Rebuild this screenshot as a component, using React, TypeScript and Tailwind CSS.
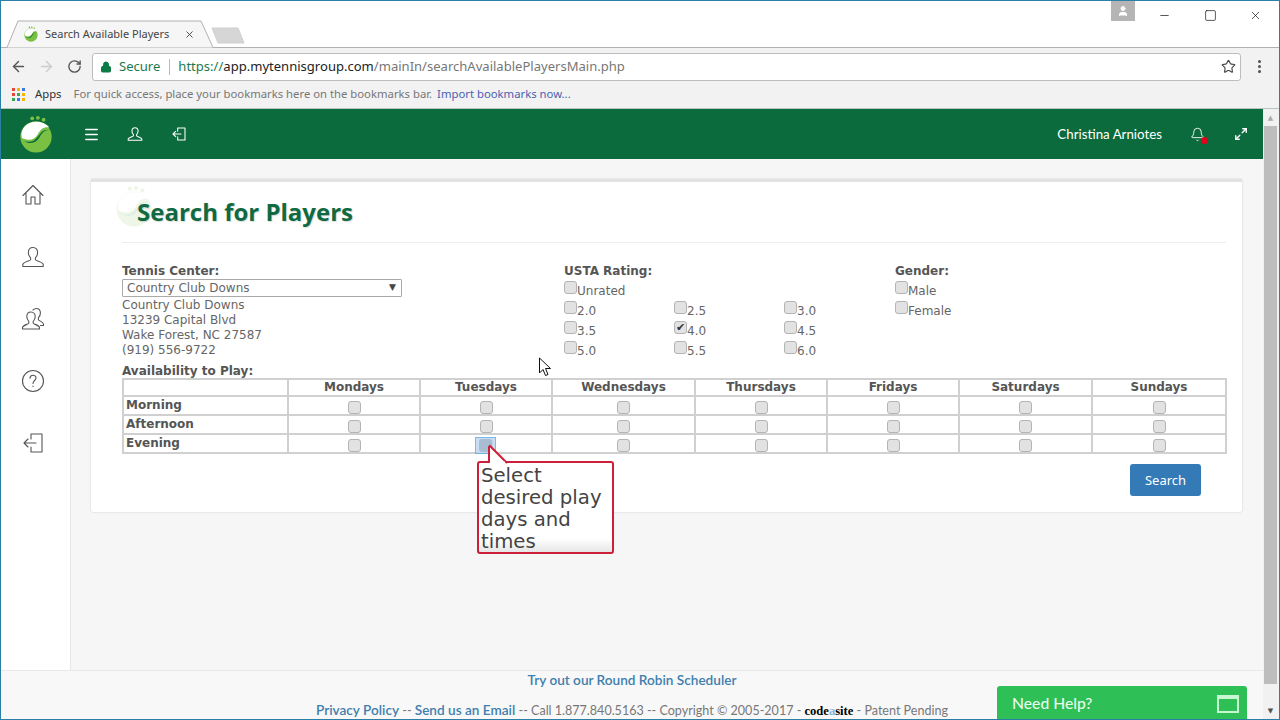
import { Bell, Maximize2, Menu, MoreVertical, RotateCw, Star, ArrowLeft, ArrowRight, Lock, X, Minus, Square, User } from 'lucide-react';

const days = ['Mondays', 'Tuesdays', 'Wednesdays', 'Thursdays', 'Fridays', 'Saturdays', 'Sundays'];
const times = ['Morning', 'Afternoon', 'Evening'];
const ratings = ['2.0', '2.5', '3.0', '3.5', '4.0', '4.5', '5.0', '5.5', '6.0'];
const appsColors = ['bg-[#e8453c]', 'bg-[#f4b400]', 'bg-[#3b78e7]', 'bg-[#e8453c]', 'bg-[#34a853]', 'bg-[#f4b400]', 'bg-[#34a853]', 'bg-[#3b78e7]', 'bg-[#f4b400]'];

const Logo = ({ size, className }: { size: number; className?: string }) => (
  <svg width={size} height={size} viewBox="0 0 36 40" className={className}>
    <circle cx="18" cy="23" r="16.5" fill="#7ac143" />
    <path d="M3 24C1 14 9 7 18 7c6 0 11 2 14 6-6-1-9 2-12 7-3 6-10 8-17 4z" fill="#fff" />
    <path d="M5 27c7 5 14 2 17-4 3-5 6-8 12-7-3-1-7-1-10 2-4 4-6 9-11 10-3 .5-6 0-8-1z" fill="#0b6b3d" />
    <circle cx="14" cy="3.500" r="2" fill="#7ac143" />
    <circle cx="20" cy="3" r="2" fill="#7ac143" />
    <circle cx="26" cy="5" r="2" fill="#7ac143" />
  </svg>
);

const LineIcon = ({ d, size = 24, weight = 1.1, className }: { d: string; size?: number; weight?: number; className?: string }) => (
  <svg width={size} height={size} viewBox="0 0 24 24" fill="none" stroke="currentColor" strokeWidth={weight} strokeLinejoin="round" strokeLinecap="round" className={className}>
    <path d={d} />
  </svg>
);

const userPath = 'M12 2.500c-3 0-4.600 2.200-4.600 5 0 2.400 1 4.200 2.200 5.300v2c0 1-7 2-7.800 4.700v2h20.400v-2c-.8-2.700-7.800-3.700-7.800-4.700v-2c1.200-1.100 2.200-2.900 2.200-5.300 0-2.800-1.600-5-4.600-5z';
const homePath = 'M2 12.500 12 2.500l10 10M5 10v11h5v-7h4v7h5V10';
const usersPath = 'M10 5c-2.700 0-4.200 2-4.200 4.600 0 2.200.9 3.800 2 4.800v1.800c0 1-5.800 1.700-6.300 4.300v1.500h17v-1.500c-.5-2.600-6.300-3.300-6.300-4.300v-1.800c1.100-1 2-2.600 2-4.800C14.200 7 12.700 5 10 5zM12 3c1-1 2-1.500 3.200-1.500 2.700 0 4.200 2 4.200 4.600 0 2.200-.9 3.800-2 4.800v1.800c0 1 4.600 1.700 5.100 4.300v1.500h-3';
const exitPath = 'M10 8V3h11v18H10v-5M15 12H3M3 12l4-4M3 12l4 4';
const helpPath = 'M12 1.500a10.500 10.500 0 1 0 0 21 10.500 10.500 0 0 0 0-21zM9 9.300c0-4 6-4 6-.3 0 2.500-3 2.500-3 5.500M12 17v.6';

const Box = ({ checked }: { checked?: boolean }) => (
  <span className="inline-flex h-[13px] w-[13px] shrink-0 items-center justify-center rounded-[3px] border border-[#b4b4b4] bg-[#e2e2e2] text-[11px] leading-none text-[#333]">
    {checked ? '✔' : ''}
  </span>
);

const Rating = ({ label, checked }: { label: string; checked?: boolean }) => (
  <div className="flex h-5 items-start">
    <span className="mt-[2px] flex"><Box checked={checked} /></span>
    <span className="mt-[5px] leading-[15px]">{label}</span>
  </div>
);

const App = () => {
  return (
    <div className="relative flex h-[720px] w-[1280px] flex-col overflow-hidden border border-[#2b7fa6] bg-white font-['DejaVu_Sans',sans-serif] text-[12px] text-[#666]">
      {/* browser tabs */}
      <div className="relative h-[46px] shrink-0 bg-white font-['Noto_Sans',sans-serif]">
        <svg width="250" height="47" className="absolute left-0 top-0">
          <path d="M0 46.500h6L17 20h183l12 26.500" fill="#f6f6f6" stroke="#b0b0b0" />
          <path d="M211 27h26l6 15h-26z" fill="#d6d6d6" stroke="#cfcfcf" />
        </svg>
        <div className="absolute left-[22px] top-[25px] flex items-center">
          <Logo size={16} />
          <span className="ml-[6px] text-[11px] leading-[16px] text-[#444]">Search Available Players</span>
          <X size={11} strokeWidth={2} className="ml-[15px] text-[#444]" />
        </div>
        <div className="absolute left-[1110px] top-0 flex h-5 w-6 items-center justify-center bg-[#b5b5b5]">
          <User size={12} fill="#fff" stroke="#fff" />
        </div>
        <div className="absolute left-[1157px] top-[8px] flex items-center gap-[33px] text-black">
          <Minus size={13} strokeWidth={1.2} />
          <Square size={13} strokeWidth={1.2} />
          <X size={13} strokeWidth={1.2} className="-ml-[1px]" />
        </div>
      </div>

      {/* toolbar */}
      <div className="flex h-[37px] shrink-0 items-center border-t border-[#b0b0b0] bg-[#f2f2f2] pl-[9px] pt-[1px] font-['Noto_Sans',sans-serif]">
        <ArrowLeft size={17} className="text-[#555]" />
        <ArrowRight size={17} className="ml-[11px] text-[#ccc]" />
        <RotateCw size={15} strokeWidth={2.2} className="ml-[12px] text-[#555]" />
        <div className="ml-[10px] flex h-[28px] w-[1149px] items-center rounded-[3px] border border-[#bdbdbd] bg-white pl-[7px] pr-[4px] text-[13.05px]">
          <Lock size={12} fill="#0b7a45" stroke="#0b7a45" />
          <span className="ml-[7px] text-[#1c7a50]">Secure</span>
          <span className="ml-[9px] h-[16px] w-px bg-[#bbb]" />
          <span className="ml-[8px] text-[#1c7a50]">https://</span>
          <span className="text-[#222]">app.mytennisgroup.com</span>
          <span className="text-[#777]">/mainIn/searchAvailablePlayersMain.php</span>
          <Star size={15} strokeWidth={1.8} className="ml-auto text-[#444]" />
        </div>
        <MoreVertical size={17} strokeWidth={2.4} className="ml-[10px] text-[#555]" />
      </div>

      {/* bookmarks */}
      <div className="flex h-[24px] shrink-0 items-center bg-[#f2f2f2] pb-[3px] pl-[11px] font-['Noto_Sans',sans-serif] text-[11.3px]">
        <div className="grid grid-cols-3 gap-[2px]">
          {appsColors.map((c, i) => (
            <span key={i} className={`h-[3px] w-[3px] ${c}`} />
          ))}
        </div>
        <span className="ml-[10px] text-[#333]">Apps</span>
        <span className="ml-[12px] text-[#777]">For quick access, place your bookmarks here on the bookmarks bar.</span>
        <span className="ml-[5px] text-[#4a5fb0]">Import bookmarks now...</span>
      </div>

      <div className="flex min-h-0 flex-1 border-t border-[#b8c4bc]">
        <div className="flex min-w-0 flex-1 flex-col">
          {/* app header */}
          <div className="flex h-[50px] shrink-0 items-center bg-[#0b6b3d] pl-[16px] pr-[15px] font-['Noto_Sans',sans-serif] text-white">
            <Logo size={38} />
            <Menu size={17} strokeWidth={2.2} className="ml-[28px]" />
            <LineIcon d={userPath} size={16} weight={1.6} className="ml-[27px]" />
            <LineIcon d={exitPath} size={16} weight={1.6} className="ml-[28px]" />
            <span className="ml-auto mt-[1px] font-['Lato',sans-serif] text-[13.3px]">Christina Arniotes</span>
            <div className="relative ml-[28px]">
              <Bell size={15} strokeWidth={1.4} />
              <span className="absolute left-[11px] top-[10px] h-[7px] w-[7px] rounded-full bg-[#e2001a]" />
            </div>
            <Maximize2 size={14} strokeWidth={2.4} className="ml-[29px]" />
          </div>

          <div className="flex min-h-0 flex-1">
            {/* sidebar */}
            <div className="flex w-[70px] shrink-0 flex-col items-center gap-[38px] border-r border-[#e6e6e6] bg-white pr-[6px] pt-[24px] text-[#555]">
              <LineIcon d={homePath} />
              <LineIcon d={userPath} />
              <LineIcon d={usersPath} />
              <LineIcon d={helpPath} />
              <LineIcon d={exitPath} />
            </div>

            {/* main */}
            <div className="min-w-0 flex-1 bg-[#f6f6f6] pl-[20px] pr-[21px] pt-[20px]">
              <div className="h-[333px] rounded-[2px] border-t-[3px] border-[#e2e2e2] bg-white pl-[31px] pr-[16px] shadow-[0_0_2px_rgba(0,0,0,0.2)]">
                <div className="relative h-[61px] border-b border-[#eeeeee]">
                  <Logo size={42} className="absolute -left-[9px] top-[3px] opacity-[0.12]" />
                  <h1 className="relative pl-[15px] pt-[14px] font-['Open_Sans',sans-serif] text-[24px] font-bold leading-[32px] text-[#0f6a42] [text-shadow:1px_1px_1px_rgba(0,0,0,0.15)]">
                    Search for Players
                  </h1>
                </div>

                <div className="mt-[21px] flex h-[100px]">
                  <div className="w-[442px]">
                    <div className="font-bold leading-[15px] text-[#555]">Tennis Center:</div>
                    <div className="flex h-[18px] w-[280px] items-center justify-between rounded-[1px] border border-[#aaa] pl-[4px] pr-[5px]">
                      <span>Country Club Downs</span>
                      <span className="text-[9px] text-[#444]">▼</span>
                    </div>
                    <div className="mt-[1px] leading-[15px]">
                      <div>Country Club Downs</div>
                      <div>13239 Capital Blvd</div>
                      <div>Wake Forest, NC 27587</div>
                      <div>(919) 556-9722</div>
                    </div>
                  </div>
                  <div className="w-[331px]">
                    <div className="font-bold leading-[15px] text-[#555]">USTA Rating:</div>
                    <Rating label="Unrated" />
                    <div className="grid w-[330px] grid-cols-3">
                      {ratings.map((r) => (
                        <Rating key={r} label={r} checked={r === '4.0'} />
                      ))}
                    </div>
                  </div>
                  <div>
                    <div className="font-bold leading-[15px] text-[#555]">Gender:</div>
                    <Rating label="Male" />
                    <Rating label="Female" />
                  </div>
                </div>

                <div className="font-bold leading-[15px] text-[#555]">Availability to Play:</div>
                <table className="-mt-[1px] w-[1103px] table-fixed border-collapse border-2 border-[#d0d0d0] font-bold text-[#555]">
                  <colgroup>
                    <col className="w-[165px]" />
                    <col className="w-[132px]" />
                    <col className="w-[132px]" />
                    <col className="w-[143px]" />
                    <col className="w-[132px]" />
                    <col className="w-[132px]" />
                    <col className="w-[133px]" />
                    <col className="w-[134px]" />
                  </colgroup>
                  <thead>
                    <tr className="h-[17px]">
                      <th className="border-2 border-[#d0d0d0]" />
                      {days.map((d) => (
                        <th key={d} className="border-2 border-[#d0d0d0] p-0 text-center font-bold leading-[13px]">{d}</th>
                      ))}
                    </tr>
                  </thead>
                  <tbody>
                    {times.map((t) => (
                      <tr key={t} className="h-[19px]">
                        <td className="border-2 border-[#d0d0d0] pb-0 pl-[2px] pt-[1px] align-top leading-[14px]">{t}</td>
                        {days.map((d) => (
                          <td key={d} className="border-2 border-[#d0d0d0] p-0 pt-[3px] text-center align-middle">
                            <span className="flex items-center justify-center"><Box /></span>
                          </td>
                        ))}
                      </tr>
                    ))}
                  </tbody>
                </table>

                <div className="mt-[10px] flex justify-end pr-[25px]">
                  <button className="h-[32px] w-[71px] rounded-[3px] bg-[#337ab7] pt-[1px] font-['Noto_Sans',sans-serif] text-[13px] text-white">Search</button>
                </div>
              </div>
            </div>
          </div>

          {/* footer */}
          <div className="h-[49px] shrink-0 border-t border-[#e8e8e8] bg-[#f8f8f8] text-center font-['Lato',sans-serif] text-[12.55px] leading-[18px]">
            <div className="text-[13.6px] font-semibold text-[#3f7fae]">Try out our Round Robin Scheduler</div>
            <div className="mt-[12px] text-[#777]">
              <span className="text-[13.6px] font-semibold text-[#3f7fae]">Privacy Policy</span>
              {' -- '}
              <span className="text-[13.6px] font-semibold text-[#3f7fae]">Send us an Email</span>
              {' -- Call 1.877.840.5163 -- Copyright © 2005-2017 - '}
              <span className="font-['Liberation_Serif',serif] font-bold text-black">code<span className="text-[#7fb4d8]">a</span>site</span>
              {' - Patent Pending'}
            </div>
          </div>
        </div>

        {/* scrollbar */}
        <div className="flex w-[16px] shrink-0 flex-col bg-[#f1f1f1] pb-[4px] pl-[1px] pt-[5px]">
          <span className="w-[13px] text-center text-[7px] leading-[8px] text-[#aaa]">▲</span>
          <div className="mt-[4px] h-[558px] w-[13px] bg-[#bdbdbd]" />
          <span className="mt-auto w-[13px] text-center text-[7px] leading-[8px] text-[#505050]">▼</span>
        </div>
      </div>

      {/* focus ring on the Tuesday evening checkbox */}
      <div className="absolute left-[474px] top-[436px] h-[17px] w-[21px] border border-[#5aa9e6] bg-[#bcd7ef] opacity-80" />
      <span className="absolute left-[478px] top-[438px] h-[13px] w-[13px] rounded-[3px] bg-[#a9bdd2]" />

      {/* callout */}
      <div className="absolute left-[476px] top-[460px] h-[93px] w-[137px] rounded-[3px] border-2 border-[#cc1f3a] bg-gradient-to-b from-white from-85% to-[#e6e6e6] pl-[2px] pt-[2px] text-[19.7px] leading-[22px] text-[#444]">
        Select desired play days and times
      </div>
      <svg width="32" height="24" className="absolute left-[476px] top-[440px]">
        <path d="M12 22V6l1-1 17 17" fill="#fff" stroke="#cc1f3a" strokeWidth="2" />
        <path d="M13 20.500h15V24H13z" fill="#fff" />
      </svg>

      {/* mouse pointer */}
      <svg width="14" height="20" viewBox="0 0 14 20" className="absolute left-[537px] top-[356px]">
        <path d="M1.500 1v15l3.500-3.500 2.500 6 2.500-1-2.500-6h5z" fill="#fff" stroke="#111" strokeWidth="1" />
      </svg>

      {/* need help tab */}
      <div className="absolute left-[996px] top-[685px] flex h-[34px] w-[250px] items-center justify-between rounded-t-[3px] bg-[#2fbf57] pl-[15px] pr-[8px] pt-[1px] font-['Lato',sans-serif] text-[15.7px] font-medium text-[#e8fbe9]">
        <span>Need Help?</span>
        <span className="h-[18px] w-[22px] border-2 border-t-[4px] border-[#c8f5d2]" />
      </div>
    </div>
  );
};

export default App;
